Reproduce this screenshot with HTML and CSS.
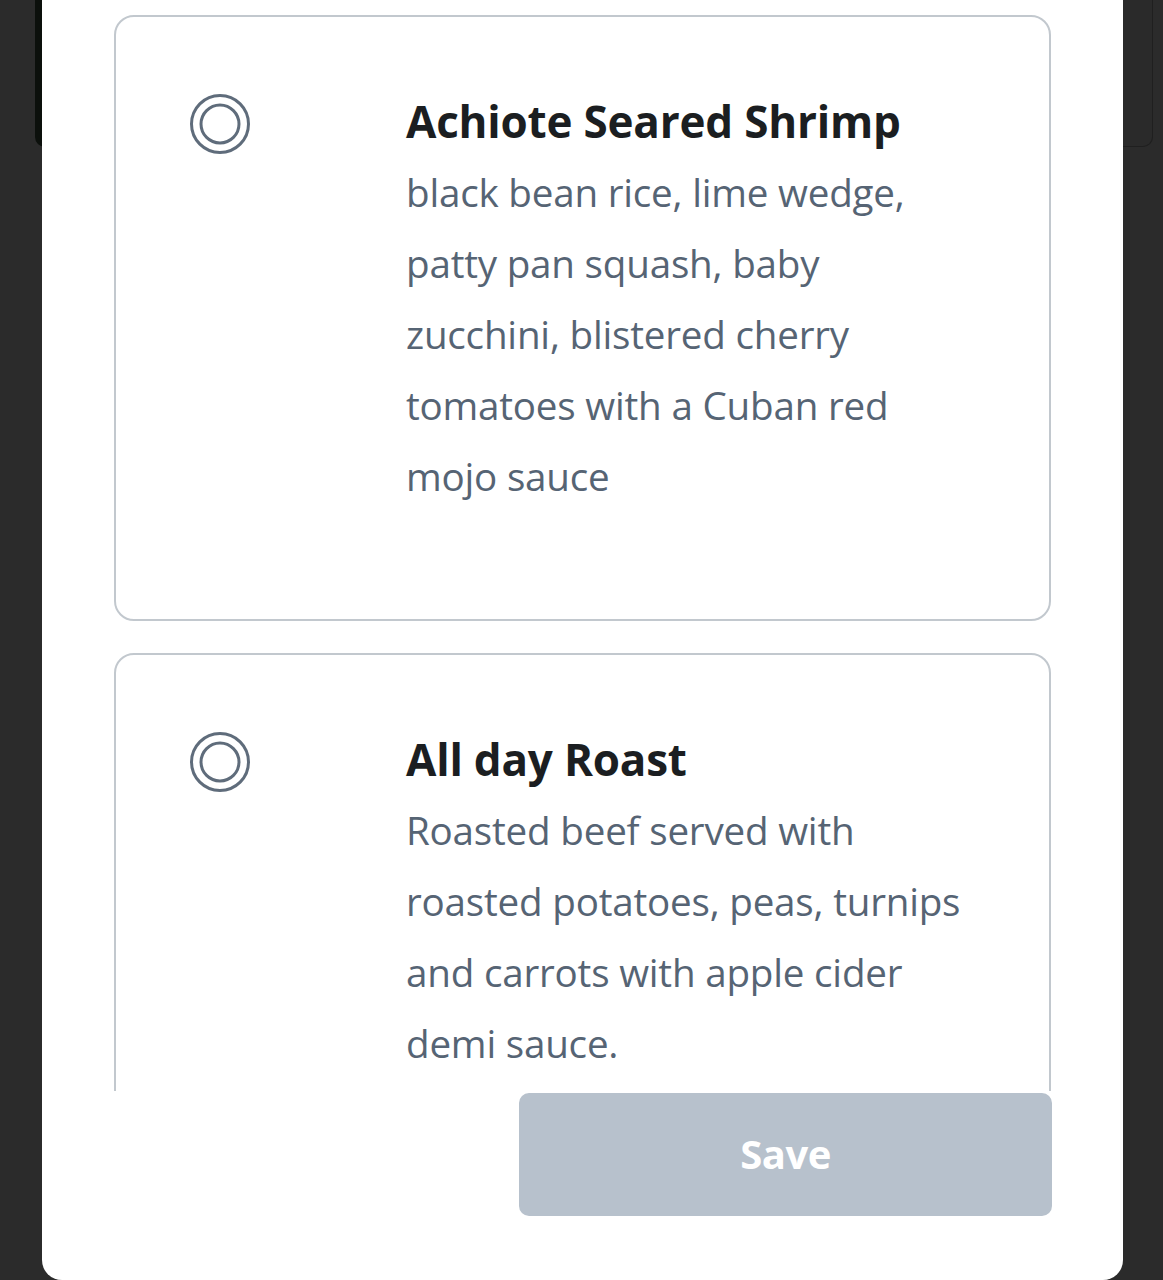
FILE: index.html
```html
<!DOCTYPE html>
<html lang="en">
<head>
<meta charset="utf-8">
<title>Choose your meal</title>
<link rel="stylesheet" href="styles.css">
</head>
<body>
  <div class="backdrop">
    <div class="bg-card"></div>
  </div>

  <div class="modal">
    <div class="options">
      <label class="option">
        <span class="radio">
          <svg width="64" height="64" viewBox="0 0 64 64" aria-hidden="true">
            <circle cx="32" cy="32" r="28.5" fill="none" stroke="#5f6c7b" stroke-width="3"/>
            <circle cx="32" cy="32" r="19" fill="none" stroke="#5f6c7b" stroke-width="3"/>
          </svg>
        </span>
        <span class="info">
          <span class="title">Achiote Seared Shrimp</span>
          <span class="desc">black bean rice, lime wedge, patty pan squash, baby zucchini, blistered cherry tomatoes with a Cuban red mojo sauce</span>
        </span>
      </label>

      <label class="option">
        <span class="radio">
          <svg width="64" height="64" viewBox="0 0 64 64" aria-hidden="true">
            <circle cx="32" cy="32" r="28.5" fill="none" stroke="#5f6c7b" stroke-width="3"/>
            <circle cx="32" cy="32" r="19" fill="none" stroke="#5f6c7b" stroke-width="3"/>
          </svg>
        </span>
        <span class="info">
          <span class="title">All day Roast</span>
          <span class="desc">Roasted beef served with roasted potatoes, peas, turnips and carrots with apple cider demi sauce.</span>
        </span>
      </label>
    </div>

    <div class="footer">
      <button class="save" type="button" disabled>Save</button>
    </div>
  </div>
</body>
</html>
```

FILE: styles.css
```css
* { box-sizing: border-box; }

html, body {
  margin: 0;
  padding: 0;
}

body {
  width: 1163px;
  height: 1280px;
  overflow: hidden;
  background: #2b2b2b;
  font-family: "Open Sans", "Noto Sans", sans-serif;
  position: relative;
}

.backdrop {
  padding-left: 35px;
  padding-right: 10px;
}

.bg-card {
  margin-top: -12px;
  height: 159px;
  border: 1px solid #1f1f1f;
  border-left: 7px solid #0c100c;
  border-radius: 0 0 10px 10px;
  background: #2a2a2a;
}

.modal {
  position: absolute;
  left: 42px;
  top: -40px;
  width: 1081px;
  height: 1320px;
  background: #ffffff;
  border-radius: 20px;
  display: flex;
  flex-direction: column;
}

.options {
  height: 1131px;
  overflow: hidden;
  padding: 55px 72px 0 72px;
  display: flex;
  flex-direction: column;
  gap: 32px;
}

.option {
  flex: none;
  display: flex;
  border: 2px solid #c2c8ce;
  border-radius: 20px;
  padding: 69px 20px 108px 74px;
}

.option:first-child {
  height: 606px;
}

.radio {
  flex: none;
  width: 64px;
  height: 64px;
  margin-top: 6px;
  margin-left: -2px;
  margin-right: 154px;
}

.radio svg { display: block; }

.info {
  display: flex;
  flex-direction: column;
  width: 570px;
}

.title {
  font-size: 44px;
  line-height: 71px;
  font-weight: 700;
  color: #1b1e21;
  letter-spacing: -0.2px;
}

.desc {
  font-size: 38.6px;
  line-height: 71px;
  color: #566474;
  letter-spacing: -0.2px;
}

.footer {
  display: flex;
  justify-content: flex-end;
  padding: 2px 71px 0 0;
}

.save {
  width: 533px;
  height: 123px;
  border: none;
  border-radius: 10px;
  background: #b7c1cc;
  color: #ffffff;
  font-family: "Open Sans", "Noto Sans", sans-serif;
  font-size: 40px;
  font-weight: 700;
  letter-spacing: -0.5px;
  padding-bottom: 4px;
}
```
